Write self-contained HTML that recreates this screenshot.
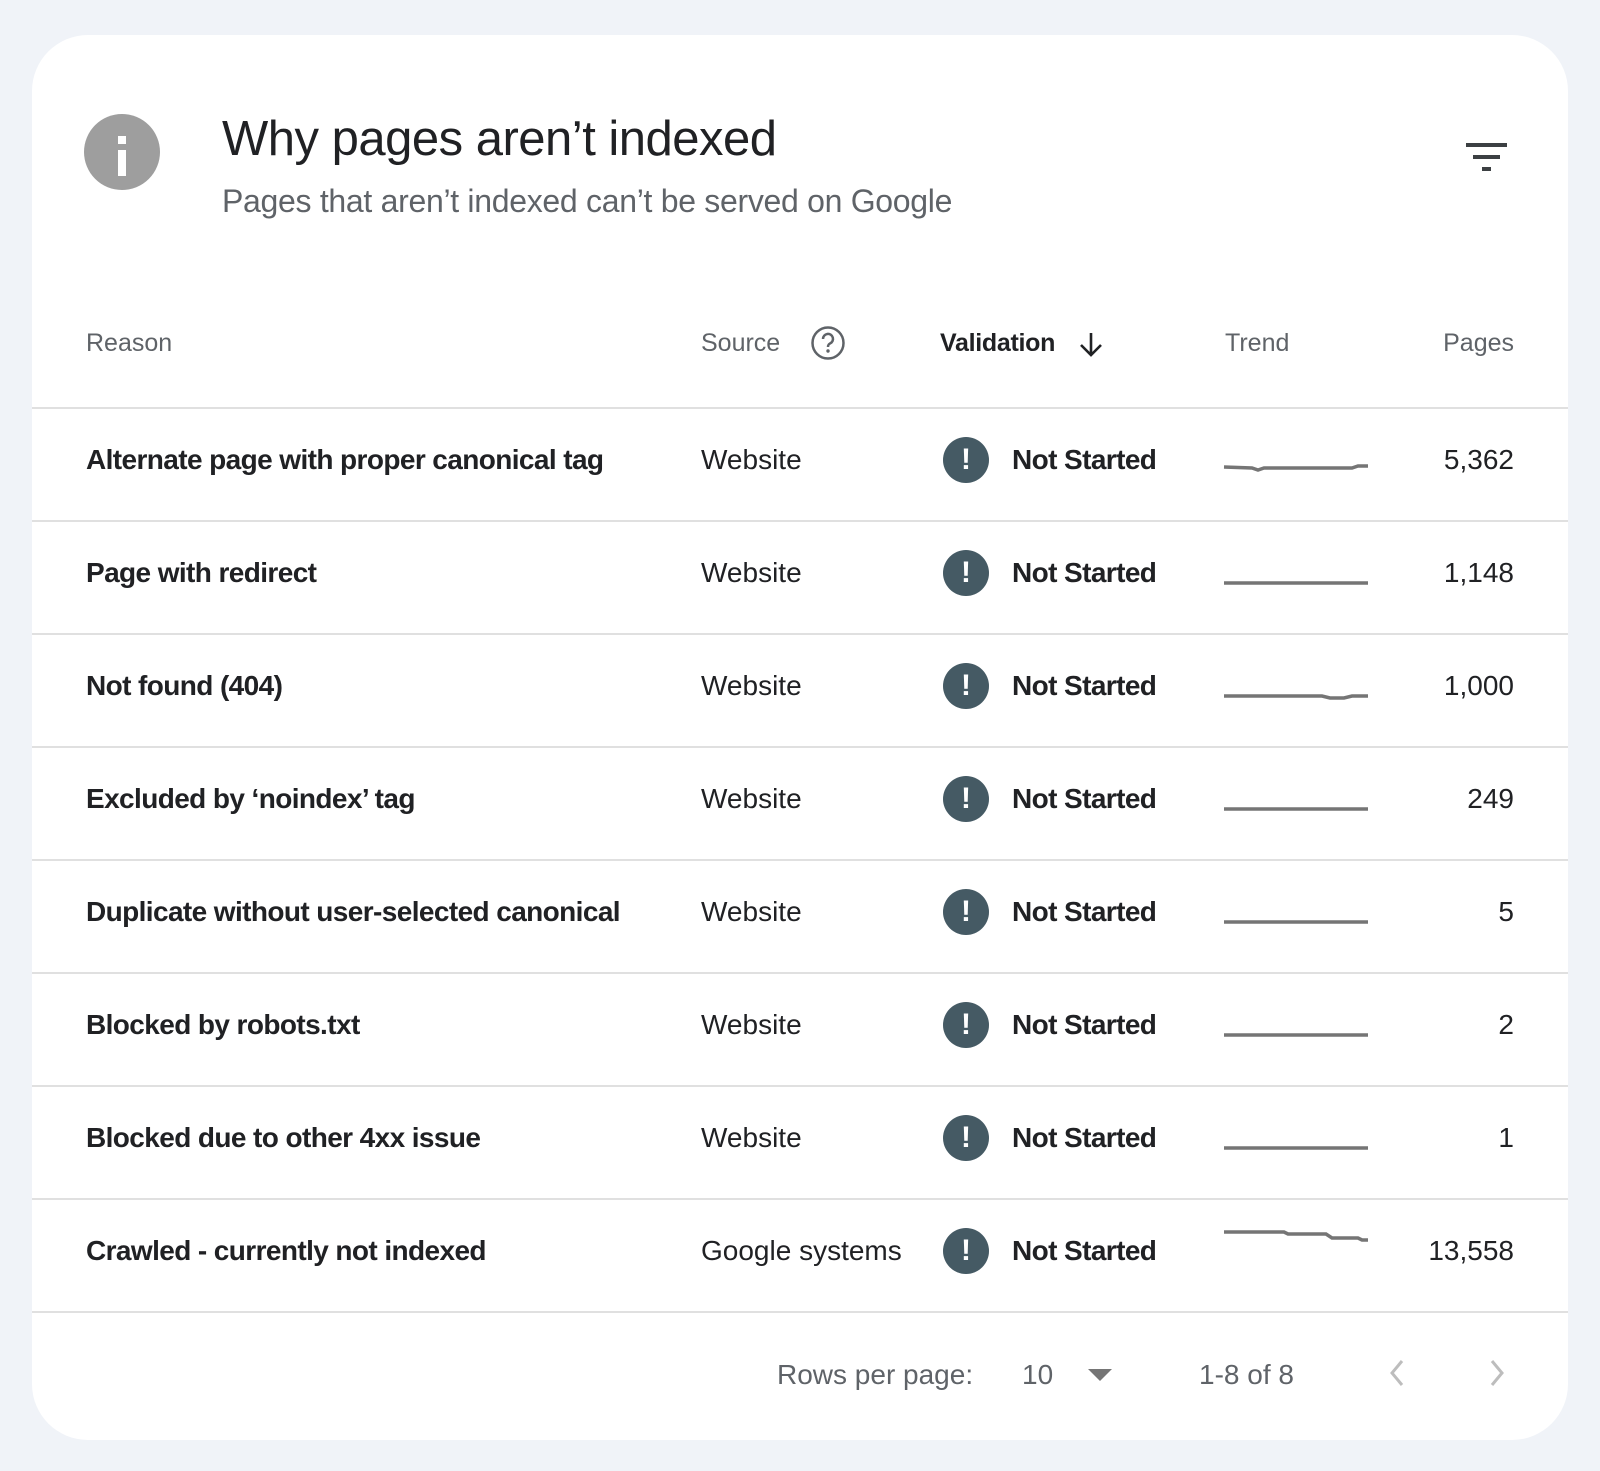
<!DOCTYPE html>
<html><head><meta charset="utf-8"><style>
*{margin:0;padding:0;box-sizing:border-box}
body{width:1600px;height:1471px;background:#f0f3f8;font-family:"Liberation Sans",Arial,sans-serif;position:relative;overflow:hidden}
.card{position:absolute;left:32px;top:35px;width:1536px;height:1405px;background:#fff;border-radius:56px}
.a{position:absolute;white-space:nowrap}
.hdr{font-size:25px;color:#5f6368;top:294px}
.line{position:absolute;left:0;width:1536px;height:2px;background:#e0e0e0}
.r{font-size:28px;color:#202124;transform:translateY(-50%)}
.b{font-weight:bold;letter-spacing:-0.6px}
.ic{position:absolute;width:46px;height:46px;border-radius:50%;background:#455a64;color:#fff;font-weight:bold;font-size:30px;text-align:center;line-height:46px;transform:translateY(-50%)}
</style></head><body>
<div class="card">
<div class="a" style="left:52px;top:79px;width:76px;height:76px;border-radius:50%;background:#9e9e9e"></div>
<div class="a" style="left:86px;top:101px;width:8px;height:8px;background:#fff"></div>
<div class="a" style="left:86px;top:115px;width:8px;height:26px;background:#fff"></div>
<div class="a" style="left:190px;top:76px;font-size:49px;color:#202124;letter-spacing:-0.5px">Why pages aren’t indexed</div>
<div class="a" style="left:190px;top:148px;font-size:32px;color:#5f6368;letter-spacing:-0.3px">Pages that aren’t indexed can’t be served on Google</div>
<div class="a" style="left:1434px;top:108px;width:41px;height:4px;background:#3c4043"></div>
<div class="a" style="left:1441px;top:120px;width:27px;height:4px;background:#3c4043"></div>
<div class="a" style="left:1450px;top:132px;width:9px;height:4px;background:#3c4043"></div>

<div class="a hdr" style="left:54px">Reason</div>
<div class="a hdr" style="left:669px">Source</div>
<svg class="a" style="left:778px;top:290px" width="36" height="36" viewBox="0 0 36 36"><circle cx="18" cy="18" r="15.5" fill="none" stroke="#5f6368" stroke-width="2.5"/><path d="M13 14a5 5 0 1 1 7 4.5c-1.5.8-2 1.5-2 3.5" fill="none" stroke="#5f6368" stroke-width="2.5"/><circle cx="18" cy="26" r="1.7" fill="#5f6368"/></svg>
<div class="a hdr" style="left:908px;color:#202124;font-weight:bold;letter-spacing:-0.3px">Validation</div>
<svg class="a" style="left:1046px;top:296px" width="26" height="28" viewBox="0 0 26 28"><path d="M13 2v22M3 14l10 10 10-10" fill="none" stroke="#202124" stroke-width="2.6"/></svg>
<div class="a hdr" style="left:1193px">Trend</div>
<div class="a hdr" style="right:54px">Pages</div>
<div class="line" style="top:372px"></div>

<div class="a r b" style="left:54px;top:425px">Alternate page with proper canonical tag</div>
<div class="a r b" style="left:54px;top:538px">Page with redirect</div>
<div class="a r b" style="left:54px;top:651px">Not found (404)</div>
<div class="a r b" style="left:54px;top:764px">Excluded by ‘noindex’ tag</div>
<div class="a r b" style="left:54px;top:877px">Duplicate without user-selected canonical</div>
<div class="a r b" style="left:54px;top:990px">Blocked by robots.txt</div>
<div class="a r b" style="left:54px;top:1103px">Blocked due to other 4xx issue</div>
<div class="a r b" style="left:54px;top:1216px">Crawled - currently not indexed</div>

<div class="a r" style="left:669px;top:425px">Website</div>
<div class="a r" style="left:669px;top:538px">Website</div>
<div class="a r" style="left:669px;top:651px">Website</div>
<div class="a r" style="left:669px;top:764px">Website</div>
<div class="a r" style="left:669px;top:877px">Website</div>
<div class="a r" style="left:669px;top:990px">Website</div>
<div class="a r" style="left:669px;top:1103px">Website</div>
<div class="a r" style="left:669px;top:1216px">Google systems</div>

<div class="ic" style="left:911px;top:425px">!</div><div class="a r b" style="left:980px;top:425px">Not Started</div>
<div class="ic" style="left:911px;top:538px">!</div><div class="a r b" style="left:980px;top:538px">Not Started</div>
<div class="ic" style="left:911px;top:651px">!</div><div class="a r b" style="left:980px;top:651px">Not Started</div>
<div class="ic" style="left:911px;top:764px">!</div><div class="a r b" style="left:980px;top:764px">Not Started</div>
<div class="ic" style="left:911px;top:877px">!</div><div class="a r b" style="left:980px;top:877px">Not Started</div>
<div class="ic" style="left:911px;top:990px">!</div><div class="a r b" style="left:980px;top:990px">Not Started</div>
<div class="ic" style="left:911px;top:1103px">!</div><div class="a r b" style="left:980px;top:1103px">Not Started</div>
<div class="ic" style="left:911px;top:1216px">!</div><div class="a r b" style="left:980px;top:1216px">Not Started</div>

<svg class="a" style="left:1190px;top:380px" width="150" height="870" viewBox="0 0 150 870" fill="none" stroke="#757575" stroke-width="3.5">
<path d="M2 52 L30 53 L36 55 L42 53 L130 53 L136 51 L146 51"/>
<path d="M2 168 L146 168"/>
<path d="M2 281 L100 281 L108 283 L122 283 L130 281 L146 281"/>
<path d="M2 394 L146 394"/>
<path d="M2 507 L146 507"/>
<path d="M2 620 L146 620"/>
<path d="M2 733 L146 733"/>
<path d="M2 817 L62 817 L66 819 L104 819 L110 823 L136 823 L140 825 L146 825"/>
</svg>

<div class="a r" style="right:54px;top:425px">5,362</div>
<div class="a r" style="right:54px;top:538px">1,148</div>
<div class="a r" style="right:54px;top:651px">1,000</div>
<div class="a r" style="right:54px;top:764px">249</div>
<div class="a r" style="right:54px;top:877px">5</div>
<div class="a r" style="right:54px;top:990px">2</div>
<div class="a r" style="right:54px;top:1103px">1</div>
<div class="a r" style="right:54px;top:1216px">13,558</div>

<div class="line" style="top:485px"></div>
<div class="line" style="top:598px"></div>
<div class="line" style="top:711px"></div>
<div class="line" style="top:824px"></div>
<div class="line" style="top:937px"></div>
<div class="line" style="top:1050px"></div>
<div class="line" style="top:1163px"></div>
<div class="line" style="top:1276px"></div>

<div class="a r" style="left:745px;top:1340px;color:#5f6368">Rows per page:</div>
<div class="a r" style="left:990px;top:1340px;color:#5f6368">10</div>
<svg class="a" style="left:1055px;top:1333px" width="26" height="14"><path d="M1 1h24L13 13z" fill="#757575"/></svg>
<div class="a r" style="left:1167px;top:1340px;color:#5f6368">1-8 of 8</div>
<svg class="a" style="left:1355px;top:1323px" width="20" height="30"><path d="M15 3L5 15l10 12" fill="none" stroke="#bdbdbd" stroke-width="3"/></svg>
<svg class="a" style="left:1455px;top:1323px" width="20" height="30"><path d="M5 3l10 12-10 12" fill="none" stroke="#bdbdbd" stroke-width="3"/></svg>
</div>
</body></html>
